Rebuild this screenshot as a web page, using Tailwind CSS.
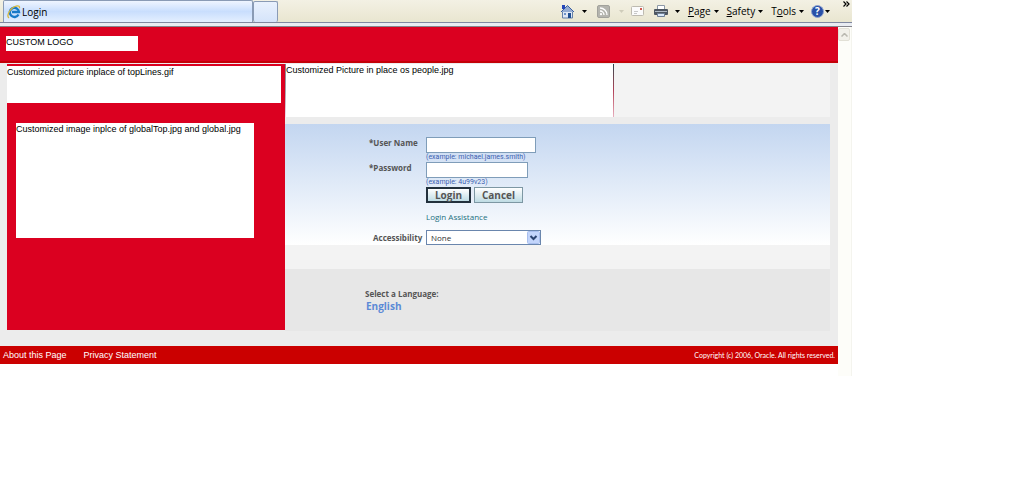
<!DOCTYPE html>
<html lang="en">

<head>
    <meta charset="UTF-8" />
    <meta name="viewport" content="width=device-width, initial-scale=1.0" />
    <title>Login</title>
    <script src="https://cdn.jsdelivr.net/npm/@tailwindcss/browser@4"></script>
</head>

<body class="bg-white pr-[162px] font-['Liberation_Sans',sans-serif] text-[9px] leading-3 text-black">
    <!-- ============== BROWSER BAR ========= -->
    <div class="border-b border-[#85858c] bg-[#e9ecf2] pb-[3px] font-['Open_Sans',sans-serif] text-[10px]">
        <div class="flex h-[23px] justify-between border-b border-[#8088a0] bg-linear-to-b from-[#f3f1e4] to-[#e9e6d0]">
            <div class="flex items-end pl-[3px]">
                <div class="flex h-[22px] w-[250px] items-center gap-px rounded-t-xs border border-b-0 border-[#8a9bb5] bg-linear-to-b from-[#eff5ff] via-[#c9defd] to-[#e4efff] pl-[3px]">
                    <svg class="size-[14px]" viewBox="0 0 14 14" fill="none">
                        <path d="M11.5 9.5A4.6 4.6 0 1 1 12 7H5" stroke="#1879c8" stroke-width="2.4" />
                        <path d="M2 13C-1 11 3 3 9 1.2c3-1 4 .3 3.3 2" stroke="#d8b93c" stroke-width="1.3" />
                    </svg>
                    <span>Login</span>
                </div>
                <button aria-label="New tab" class="h-[21px] w-[25px] rounded-xs border border-b-0 border-[#8a9bb5] bg-linear-to-b from-[#e9f1fd] to-[#d5e4fa]"></button>
            </div>
            <div class="flex grow items-center justify-end pr-[2px]">
                <button aria-label="Home" class="flex items-center gap-[7px]">
                    <svg class="size-[15px]" viewBox="0 0 15 15">
                        <path d="M2.5 7.5h10V14h-10z" fill="#dfe8f6" stroke="#6580a8" />
                        <path d="M1 8l6.500-6.500L14 8" fill="#94acd2" stroke="#3a5fa0" />
                        <path d="M2 1h3v4H2z" fill="#2446b8" />
                        <path d="M8 9h3v5H8z" fill="#1f4e91" />
                        <path d="M4 9h2v2H4z" fill="#6f93c9" />
                    </svg>
                    <svg class="w-[5px]" viewBox="0 0 5 3"><path d="M0 0h5L2.500 3z" /></svg>
                </button>
                <button aria-label="Feeds" class="ml-[10px] flex items-center gap-[9px]">
                    <svg class="size-[13px]" viewBox="0 0 13 13" fill="none">
                        <rect x=".5" y=".5" width="12" height="12" rx="1.500" fill="#b4b4ae" stroke="#a2a29c" />
                        <path d="M3 6a4 4 0 0 1 4 4M3 3a7 7 0 0 1 7 7" stroke="#fff" stroke-width="1.300" />
                        <circle cx="4" cy="9.200" r="1.100" fill="#fff" />
                    </svg>
                    <svg class="w-[5px]" viewBox="0 0 5 3"><path d="M0 0h5L2.500 3z" fill="#cfccba" /></svg>
                </button>
                <button aria-label="Read mail" class="ml-[7px]">
                    <svg class="block h-[10px] w-[13px]" viewBox="0 0 13 10">
                        <rect x=".5" y=".5" width="12" height="9" rx="1" fill="#fbfbfb" stroke="#bdbab0" />
                        <path d="M9 2h2v2H9z" fill="#d05a50" />
                        <path d="M3 5.500h4M3 7.500h3" stroke="#c8c8c8" />
                    </svg>
                </button>
                <button aria-label="Print" class="ml-[10px] flex items-center gap-[7px]">
                    <svg class="size-[14px]" viewBox="0 0 14 14">
                        <path d="M3.500 1.500h7V6h-7z" fill="#fff" stroke="#8d98a6" />
                        <rect y="5" width="14" height="6" rx="1" fill="#4d5661" />
                        <path d="M1 7h12v1H1z" fill="#aeb9c4" />
                        <path d="M3.500 9.500h7v3h-7z" fill="#d9e8fa" stroke="#6f8097" />
                    </svg>
                    <svg class="w-[5px]" viewBox="0 0 5 3"><path d="M0 0h5L2.500 3z" /></svg>
                </button>
                <button class="ml-[8px] flex items-center gap-[3px]">
                    <span><u>P</u>age</span>
                    <svg class="w-[5px]" viewBox="0 0 5 3"><path d="M0 0h5L2.500 3z" /></svg>
                </button>
                <button class="ml-[8px] flex items-center gap-[3px]">
                    <span><u>S</u>afety</span>
                    <svg class="w-[5px]" viewBox="0 0 5 3"><path d="M0 0h5L2.500 3z" /></svg>
                </button>
                <button class="ml-[8px] flex items-center gap-[3px]">
                    <span>T<u>o</u>ols</span>
                    <svg class="w-[5px]" viewBox="0 0 5 3"><path d="M0 0h5L2.500 3z" /></svg>
                </button>
                <button aria-label="Help" class="ml-[7px] flex items-center gap-px">
                    <span class="flex size-[13px] items-center justify-center rounded-full border border-[#8fa3cf] bg-[#2950a8] text-[10px] font-bold text-white">?</span>
                    <svg class="w-[5px]" viewBox="0 0 5 3"><path d="M0 0h5L2.500 3z" /></svg>
                </button>
                <button aria-label="More" class="ml-[13px] self-start pt-px">
                    <svg class="block h-[6px] w-[7px]" viewBox="0 0 7 6" fill="none" stroke="#000" stroke-width="1.200"><path d="M.5.5L3 3 .5 5.500M3.500.5L6 3 3.500 5.500" /></svg>
                </button>
            </div>
        </div>
    </div>

    <div class="flex">
        <div class="grow">
            <!-- ============== HEADER ========= -->
            <header class="border-b-2 border-[#c40008] bg-[#db0020] px-[6px] pt-[9px] pb-[10px]">
                <div class="h-[15px] w-[132px] bg-white">CUSTOM LOGO</div>
            </header>

            <!-- ============== CONTENT ========= -->
            <main class="flex bg-[#ececec] pt-px pr-2 pb-[15px] pl-[7px]">
                <div class="mb-px w-[278px] bg-[#db0020] pt-[2px]">
                    <div class="mr-1 h-[37px] bg-white">Customized picture inplace of topLines.gif</div>
                    <div class="mt-[20px] ml-[9px] h-[115px] w-[238px] bg-white">Customized image inplce of globalTop.jpg and global.jpg</div>
                </div>
                <div class="grow">
                    <div class="flex bg-[#f3f3f3]">
                        <div class="w-px bg-linear-to-b from-[#85808a] via-[#a9a3ab] to-[#f6dcec]"></div>
                        <div class="h-[53px] w-[327px] bg-white">Customized Picture in place os people.jpg</div>
                        <div class="w-px bg-linear-to-b from-[#28444c] via-[#b04058] to-[#e8b0c0]"></div>
                    </div>
                    <form class="mt-[7px] bg-linear-to-b from-[#c3d6f0] to-white pt-[13px] pl-[84px] font-['Open_Sans',sans-serif] text-[8px] text-[#555]">
                        <div class="grid grid-cols-[57px_1fr]">
                            <label for="username" class="font-bold">*User Name</label>
                            <div>
                                <input id="username" type="text" class="block h-4 w-[110px] border border-[#7f9db9] bg-white px-1" />
                                <p class="font-[Roboto,sans-serif] text-[7px] leading-[9px] text-[#3c5fb0]">(example: michael.james.smith)</p>
                            </div>
                            <label for="password" class="font-bold">*Password</label>
                            <div>
                                <input id="password" type="password" class="block h-4 w-[102px] border border-[#7f9db9] bg-white px-1" />
                                <p class="font-[Roboto,sans-serif] text-[7px] leading-[9px] text-[#3c5fb0]">(example: 4u99v23)</p>
                                <div class="flex gap-[3px] text-[10px] leading-3 font-bold">
                                    <button type="submit" class="h-4 w-[45px] border-2 border-[#22303c] bg-linear-to-b from-white to-[#bfdce4]">Login</button>
                                    <button type="button" class="h-4 w-[49px] border border-[#7d97a3] bg-linear-to-b from-white to-[#bfdce4]">Cancel</button>
                                </div>
                                <a href="#" class="mt-[8px] block text-[#1c7080]">Login Assistance</a>
                            </div>
                        </div>
                        <div class="mt-[7px] flex items-center pl-1">
                            <label for="access" class="w-[53px] whitespace-nowrap font-bold">Accessibility</label>
                            <div class="relative">
                                <select id="access" class="block h-[15px] w-[115px] appearance-none border border-[#6a86ad] bg-white pl-1 text-[#333]">
                                    <option>None</option>
                                </select>
                                <svg class="pointer-events-none absolute top-px right-px size-[13px]" viewBox="0 0 13 13">
                                    <rect x=".5" y=".5" width="12" height="12" rx="1" fill="#c3d5fb" stroke="#a9bfee" />
                                    <path d="M3.500 5l3 3 3-3" fill="none" stroke="#2c4470" stroke-width="2" />
                                </svg>
                            </div>
                        </div>
                    </form>
                    <div class="h-6 bg-[#f3f3f3]"></div>
                    <div class="bg-[#e7e7e7] pt-[19px] pb-[19px] pl-[80px] font-['Open_Sans',sans-serif] font-bold">
                        <p class="text-[8px] text-[#555]">Select a Language:</p>
                        <a href="#" class="block pl-px text-[10px] text-[#5b8ad6]">English</a>
                    </div>
                </div>
            </main>

            <!-- ============== FOOTER ========= -->
            <footer class="flex items-center justify-between bg-[#cb0000] px-[3px] py-[3px] text-white">
                <nav class="flex gap-[17px]">
                    <a href="#">About this Page</a>
                    <a href="#">Privacy Statement</a>
                </nav>
                <p class="font-[Lato,sans-serif] text-[7px]">Copyright (c) 2006, Oracle. All rights reserved.</p>
            </footer>
            <div class="h-3"></div>
        </div>
        <!-- scroll track -->
        <div class="w-[14px] border-r border-[#f4f4ee] bg-[#fdfdf9]">
            <button aria-label="Scroll up" class="mt-px flex h-[13px] w-[12px] items-center justify-center rounded-xs border border-[#e2e0d6] bg-[#f1f0ea]">
                <svg class="w-[7px]" viewBox="0 0 7 4" fill="none" stroke="#b9b8b0" stroke-width="1.500"><path d="M.5 3.500l3-3 3 3" /></svg>
            </button>
        </div>
    </div>
</body>

</html>
